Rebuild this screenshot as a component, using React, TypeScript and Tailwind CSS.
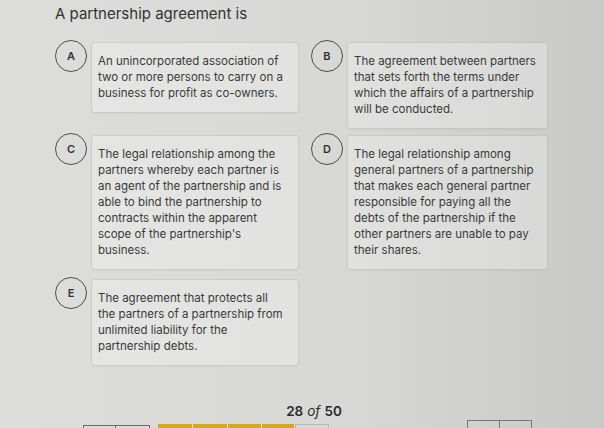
import * as React from 'react';

interface Choice {
  letter: string;
  text: string;
  pad: string;
}

const choices: Choice[] = [
  {
    letter: 'A',
    text: 'An unincorporated association of two or more persons to carry on a business for profit as co-owners.',
    pad: 'pr-[12px]',
  },
  {
    letter: 'B',
    text: 'The agreement between partners that sets forth the terms under which the affairs of a partnership will be conducted.',
    pad: 'pr-[9px]',
  },
  {
    letter: 'C',
    text: "The legal relationship among the partners whereby each partner is an agent of the partnership and is able to bind the partnership to contracts within the apparent scope of the partnership's business.",
    pad: 'pr-[12px]',
  },
  {
    letter: 'D',
    text: 'The legal relationship among general partners of a partnership that makes each general partner responsible for paying all the debts of the partnership if the other partners are unable to pay their shares.',
    pad: 'pr-[9px]',
  },
  {
    letter: 'E',
    text: 'The agreement that protects all the partners of a partnership from unlimited liability for the partnership debts.',
    pad: 'pr-[12px]',
  },
];

function ChoiceRow({ choice, className = '' }: { choice: Choice; className?: string }) {
  return (
    <div className={`flex items-start gap-1 ${className}`}>
      <div className="-mt-0.5 flex h-8 w-8 shrink-0 items-center justify-center rounded-full border border-[#4d4d4d] text-[11px] font-semibold text-[#333]">
        {choice.letter}
      </div>
      <div
        className={`flex-1 rounded-[3px] border border-black/10 bg-white/25 pt-[10px] pb-[11px] pl-[6px] text-[11.5px] leading-4 text-[#3a3a3a] shadow-[0_1px_1px_rgba(0,0,0,0.04)] ${choice.pad}`}
      >
        {choice.text}
      </div>
    </div>
  );
}

export default function App() {
  return (
    <div
      className="flex h-[428px] w-[604px] flex-col overflow-hidden bg-[linear-gradient(90deg,#dddddb_0%,#d8d8d6_55%,#c9c9c7_100%)] text-[#333]"
      style={{ fontFamily: 'Inter, "Noto Sans", sans-serif' }}
    >
      <div className="pt-[2px] pl-[55px] text-[15px] leading-6 text-[#333]">A partnership agreement is</div>

      <div className="mt-[16px] grid grid-cols-[244px_237px] items-start gap-x-[12px] gap-y-[6px] pl-[55px]">
        {choices.map((c) => (
          <ChoiceRow key={c.letter} choice={c} className={c.letter === 'E' ? 'mt-[3px]' : ''} />
        ))}
      </div>

      <div className="mt-auto flex justify-center pb-[5px] pl-6 text-[13.5px] leading-4 text-[#2a2a2a]">
        <span className="font-semibold">28</span>
        <span className="mx-1 italic">of</span>
        <span className="font-semibold">50</span>
      </div>

      <div className="flex h-[4px] items-start pl-[83px]">
        <div className="mt-[1px] flex">
          <div className="h-3 w-[33px] border border-[#6a6a6a]" />
          <div className="h-3 w-[34px] border border-l-0 border-[#6a6a6a]" />
        </div>
        <div className="ml-2 flex gap-px">
          <div className="h-3 w-[34px] bg-[#d3a724]" />
          <div className="h-3 w-[34px] bg-[#d3a724]" />
          <div className="h-3 w-[33px] bg-[#d3a724]" />
          <div className="h-3 w-[32px] bg-[#d3a724]" />
          <div className="h-3 w-[34px] border border-[#b8b8b6]" />
        </div>
        <div className="ml-auto mr-[72px] -mt-1 flex">
          <div className="h-3 w-[33px] border border-[#777]" />
          <div className="h-3 w-[32px] border border-l-0 border-[#777]" />
        </div>
      </div>
    </div>
  );
}
